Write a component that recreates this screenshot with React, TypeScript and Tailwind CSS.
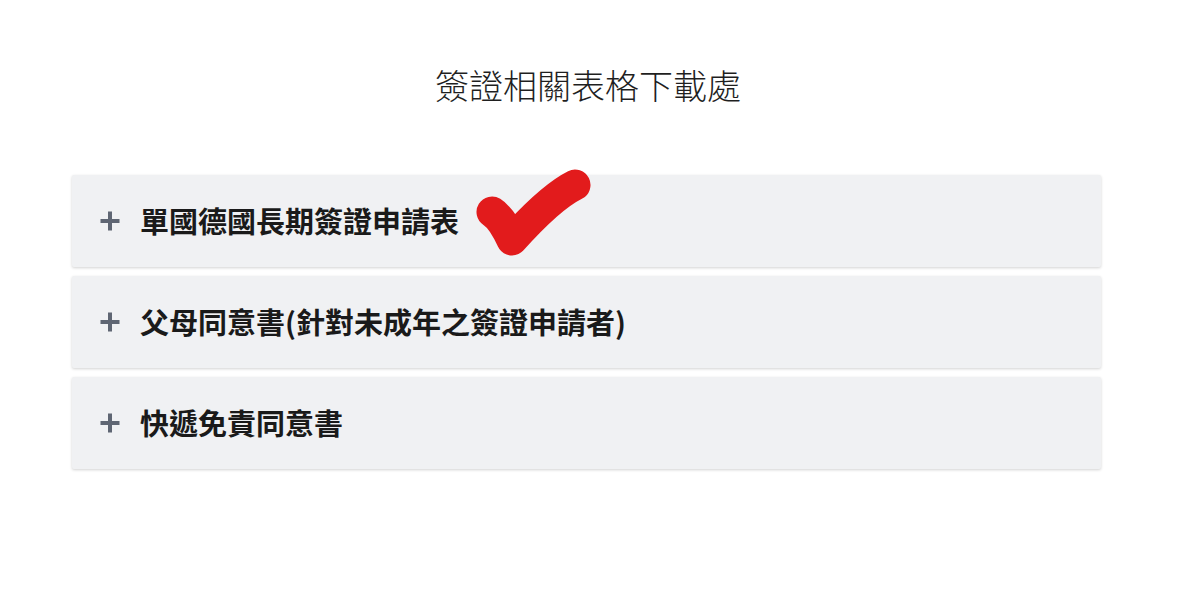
import React from 'react';

const items = [
  '單國德國長期簽證申請表',
  '父母同意書(針對未成年之簽證申請者)',
  '快遞免責同意書',
];

const cjk = { fontFamily: '"Noto Sans CJK TC", "Noto Sans", sans-serif' };

function Plus() {
  return (
    <svg width="20" height="20" viewBox="0 0 20 20" className="shrink-0">
      <path d="M10 0.5v19M0.5 10h19" stroke="#5f6673" strokeWidth="4" />
    </svg>
  );
}

export default function App() {
  return (
    <div className="relative w-[1200px] h-[591px] bg-white" style={cjk}>
      <h1 className="pt-[60px] pr-[24px] text-center text-[34px] font-light text-[#1f1f1f] leading-[50px]">
        簽證相關表格下載處
      </h1>

      <div className="mt-[65px] mx-[72px] w-[1029px] flex flex-col gap-[9px]">
        {items.map((t) => (
          <div
            key={t}
            className="h-[92px] flex items-center gap-[20px] pl-[28px] bg-[#f0f1f3] rounded-[2px] shadow-[0_1px_3px_rgba(0,0,0,0.18)]"
          >
            <Plus />
            <span className="text-[29px] font-bold text-[#1a1a1a]">{t}</span>
          </div>
        ))}
      </div>

      {/* red check mark drawn over the first row */}
      <svg className="absolute left-[470px] top-[165px]" width="130" height="95" viewBox="0 0 130 95">
        <path
          d="M22 47 C 30 52, 36 62, 42 75 C 60 55, 85 30, 105 20"
          fill="none"
          stroke="#e21b1c"
          strokeWidth="31"
          strokeLinecap="round"
          strokeLinejoin="round"
        />
      </svg>
    </div>
  );
}
